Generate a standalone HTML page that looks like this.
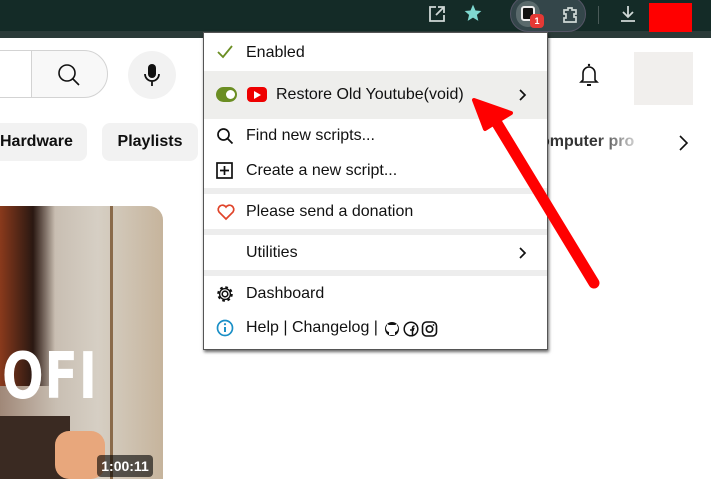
<!DOCTYPE html>
<html><head><style>
*{margin:0;padding:0;box-sizing:border-box}
body{width:711px;height:479px;overflow:hidden;background:#fff;font-family:"Liberation Sans",Arial,sans-serif;position:relative;color:#0f0f0f}
.abs{position:absolute}
.top{left:0;top:0;width:711px;height:31px;background:#142b27}
.top2{left:0;top:31px;width:711px;height:7px;background:#2b3b39}
.chip{background:#f2f2f2;border-radius:8px;height:38px;top:123px;font-size:16px;font-weight:600;line-height:38px;color:#0f0f0f}
.menu{left:203px;top:32px;width:345px;height:318px;background:#fff;border:1px solid #555;box-shadow:1px 2px 3px rgba(0,0,0,.6)}
.row{position:absolute;left:0;width:343px;font-size:16px;color:#111;}
.row span.t{position:absolute;left:42px}
.sep{position:absolute;left:0;width:343px;height:6px;background:#ededed}
.ic{position:absolute;left:12px}
</style></head><body>
<div class="abs top"></div><div class="abs top2"></div>
<svg class="abs" style="left:427px;top:4px" width="20" height="20" viewBox="0 0 20 20"><path d="M9 3H3v14h14v-6M11 3h6v6M17 3l-8 8" fill="none" stroke="#cfd8d6" stroke-width="1.8"/></svg>
<svg class="abs" style="left:463px;top:3px" width="20" height="20" viewBox="0 0 24 24"><path d="M12 2l3 7 7 .6-5.3 4.6 1.7 7.3L12 17.6 5.6 21.5l1.7-7.3L2 9.6 9 9z" fill="#7fd8d0"/></svg>
<div class="abs" style="left:510px;top:-4px;width:76px;height:36px;border-radius:18px;background:#34464a;border:1px solid #556"></div>
<div class="abs" style="left:516px;top:1px;width:24px;height:26px;border-radius:12px;background:#5a6a6c"></div>
<div class="abs" style="left:521px;top:6px;width:14px;height:15px;border-radius:3px;background:#111;border:2px solid #eee"></div>
<div class="abs" style="left:530px;top:14px;width:14px;height:14px;border-radius:4px;background:#e53935;color:#fff;font-size:9px;font-weight:bold;text-align:center;line-height:14px">1</div>
<svg class="abs" style="left:560px;top:5px" width="20" height="20" viewBox="0 0 20 20"><path d="M4 5h4V3h4v2h4v4h-2v3h2v5H4v-4h2V9H4z" fill="none" stroke="#cfd8d6" stroke-width="1.7"/></svg>
<div class="abs" style="left:598px;top:6px;width:1px;height:18px;background:#4a5a58"></div>
<svg class="abs" style="left:618px;top:4px" width="20" height="20" viewBox="0 0 20 20"><path d="M10 2v11M5 8l5 5 5-5M3 17h14" fill="none" stroke="#cfd8d6" stroke-width="1.8"/></svg>
<div class="abs" style="left:649px;top:3px;width:43px;height:29px;background:#ff0000"></div>
<div class="abs" style="left:-30px;top:50px;width:138px;height:48px;border:1px solid #d3d3d3;border-radius:0 24px 24px 0;background:#f8f8f8"></div>
<div class="abs" style="left:-30px;top:50px;width:62px;height:48px;border:1px solid #d3d3d3;background:#fff"></div>
<svg class="abs" style="left:56px;top:62px" width="26" height="26" viewBox="0 0 26 26"><circle cx="11" cy="11" r="8" fill="none" stroke="#111" stroke-width="1.6"/><path d="M17 17l6 6" stroke="#111" stroke-width="1.6"/></svg>
<div class="abs" style="left:128px;top:51px;width:48px;height:48px;border-radius:24px;background:#f2f2f2"></div>
<svg class="abs" style="left:140px;top:62px" width="24" height="26" viewBox="0 0 24 26"><rect x="8" y="2" width="8" height="14" rx="4" fill="#111"/><path d="M5 12a7 7 0 0014 0M12 19v5" fill="none" stroke="#111" stroke-width="1.8"/></svg>
<svg class="abs" style="left:577px;top:61px" width="24" height="28" viewBox="0 0 24 28"><path d="M6 19V12a6 6 0 0112 0v7l2 2H4z" fill="none" stroke="#111" stroke-width="1.6"/><circle cx="12" cy="4" r="1.2" fill="#111"/><path d="M10 24h4" stroke="#111" stroke-width="2"/></svg>
<div class="abs" style="left:634px;top:52px;width:59px;height:53px;background:#f1efed"></div>
<div class="abs chip" style="left:-10px;width:97px;padding-left:10px">Hardware</div>
<div class="abs chip" style="left:102px;width:96px;text-align:center">Playlists</div>
<div class="abs" style="left:540px;top:133px;font-size:16px;font-weight:600;background:linear-gradient(90deg,#333 60%,#ccc);-webkit-background-clip:text;-webkit-text-fill-color:transparent">omputer pro</div>
<svg class="abs" style="left:676px;top:134px" width="14" height="18" viewBox="0 0 14 18"><path d="M4 2l7 7-7 7" fill="none" stroke="#111" stroke-width="1.6"/></svg>
<div class="abs" style="left:0;top:206px;width:163px;height:273px;border-radius:0 14px 0 0;overflow:hidden;background:linear-gradient(90deg,#a08878 0%,#c9bfb3 35%,#d6cfc4 60%,#c6b49c 100%)">
 <div class="abs" style="left:0;top:0;width:55px;height:180px;background:linear-gradient(90deg,#8a3a1c,#2a1812 60%,transparent)"></div>
 <div class="abs" style="left:110px;top:0;width:3px;height:273px;background:#8a6a4a"></div>
 <div class="abs" style="left:0;top:210px;width:70px;height:63px;background:#3a2a22"></div>
 <div class="abs" style="left:55px;top:225px;width:50px;height:48px;background:#e8a77c;border-radius:14px"></div>
 <div class="abs" style="left:2px;top:134px;font-size:64px;font-weight:bold;color:#fff;letter-spacing:1px;font-family:'DejaVu Sans Condensed','DejaVu Sans',sans-serif;transform:scaleX(0.85);transform-origin:left">OFI</div>
 <div class="abs" style="left:97px;top:249px;width:56px;height:22px;border-radius:4px;background:rgba(0,0,0,.6);color:#fff;font-size:14px;font-weight:bold;text-align:center;line-height:22px">1:00:11</div>
</div>
<div class="abs menu">
 <div class="row" style="top:0;height:38px"><svg class="ic" style="top:11px" width="18" height="16" viewBox="0 0 18 16"><path d="M2 8l5 5 9-11" fill="none" stroke="#6b8e23" stroke-width="1.8"/></svg><span class="t" style="top:11px">Enabled</span></div>
 <div class="row" style="top:38px;height:48px;background:#eeeeec"><div class="ic" style="top:16px;width:21px;height:15px;border-radius:8px;background:#6b8e23"></div><div class="ic" style="left:22px;top:19px;width:9px;height:9px;border-radius:5px;background:#fff"></div>
 <div class="ic" style="left:43px;top:16px;width:20px;height:15px;border-radius:4px;background:#e00"></div><svg class="ic" style="left:50px;top:20px" width="7" height="8"><path d="M0 0l7 4-7 4z" fill="#fff"/></svg>
 <span class="t" style="left:72px;top:15px">Restore Old Youtube(void)</span><svg class="abs" style="left:314px;top:17px" width="10" height="14" viewBox="0 0 10 14"><path d="M2 2l5 5-5 5" fill="none" stroke="#111" stroke-width="1.7"/></svg></div>
 <div class="row" style="top:86px;height:34px"><svg class="ic" style="top:8px" width="18" height="18" viewBox="0 0 18 18"><circle cx="7.5" cy="7.5" r="5.5" fill="none" stroke="#111" stroke-width="1.7"/><path d="M11.5 11.5l5 5" stroke="#111" stroke-width="1.8"/></svg><span class="t" style="top:8px">Find new scripts...</span></div>
 <div class="row" style="top:120px;height:34px"><svg class="ic" style="top:9px" width="17" height="17" viewBox="0 0 17 17"><rect x="1" y="1" width="15" height="15" fill="none" stroke="#111" stroke-width="1.7"/><path d="M8.5 4v9M4 8.5h9" stroke="#111" stroke-width="1.7"/></svg><span class="t" style="top:9px">Create a new script...</span></div>
 <div class="sep" style="top:155px"></div>
 <div class="row" style="top:162px;height:34px"><svg class="ic" style="top:8px" width="20" height="18" viewBox="0 0 20 18"><path d="M10 16L3 9a4 4 0 017-5 4 4 0 017 5z" fill="none" stroke="#e0442a" stroke-width="1.7"/></svg><span class="t" style="top:8px">Please send a donation</span></div>
 <div class="sep" style="top:196px"></div>
 <div class="row" style="top:203px;height:34px"><span class="t" style="top:8px">Utilities</span><svg class="abs" style="left:314px;top:10px" width="10" height="14" viewBox="0 0 10 14"><path d="M2 2l5 5-5 5" fill="none" stroke="#111" stroke-width="1.7"/></svg></div>
 <div class="sep" style="top:237px"></div>
 <div class="row" style="top:244px;height:34px"><svg class="ic" style="top:8px" width="18" height="18" viewBox="0 0 18 18"><circle cx="9" cy="9" r="2.8" fill="none" stroke="#111" stroke-width="1.6"/><circle cx="9" cy="9" r="6.6" fill="none" stroke="#111" stroke-width="2.4" stroke-dasharray="2.6 2.6"/><circle cx="9" cy="9" r="5.4" fill="none" stroke="#111" stroke-width="1.4"/></svg><span class="t" style="top:8px">Dashboard</span></div>
 <div class="row" style="top:278px;height:34px"><svg class="ic" style="top:8px" width="18" height="18" viewBox="0 0 18 18"><circle cx="9" cy="9" r="7.5" fill="none" stroke="#1a8fc6" stroke-width="1.7"/><path d="M9 8v5" stroke="#1a8fc6" stroke-width="2"/><circle cx="9" cy="5.2" r="1.1" fill="#1a8fc6"/></svg><span class="t" style="top:8px">Help | Changelog | </span>
 <svg class="abs" style="left:180px;top:10px" width="60" height="16" viewBox="0 0 60 16"><circle cx="8" cy="8" r="7" fill="#111"/><path d="M5 14v-3c-2-.5-3-2-3-4 0-1 .5-2 1-2.5V3l2 1h6l2-1v1.5c.5.5 1 1.5 1 2.5 0 2-1 3.5-3 4v3z" fill="#fff"/><circle cx="27" cy="8" r="6.8" fill="none" stroke="#111" stroke-width="1.5"/><path d="M28.5 14V7.5h2M26 9h4M28.5 7.5c0-2 .5-2.5 2-2.5" fill="none" stroke="#111" stroke-width="1.5"/><rect x="38.5" y="1" width="14" height="14" rx="4" fill="none" stroke="#111" stroke-width="1.6"/><circle cx="45.5" cy="8" r="3.2" fill="none" stroke="#111" stroke-width="1.6"/><circle cx="49.5" cy="4" r="0.9" fill="#111"/></svg></div>
</div>
<svg class="abs" style="left:0;top:0" width="711" height="479"><path d="M594 283L495 120" stroke="#ff0000" stroke-width="11" stroke-linecap="round"/><path d="M474 100L511 113 485 129z" fill="#ff0000" stroke="#ff0000" stroke-width="4" stroke-linejoin="round"/></svg>
</body></html>
